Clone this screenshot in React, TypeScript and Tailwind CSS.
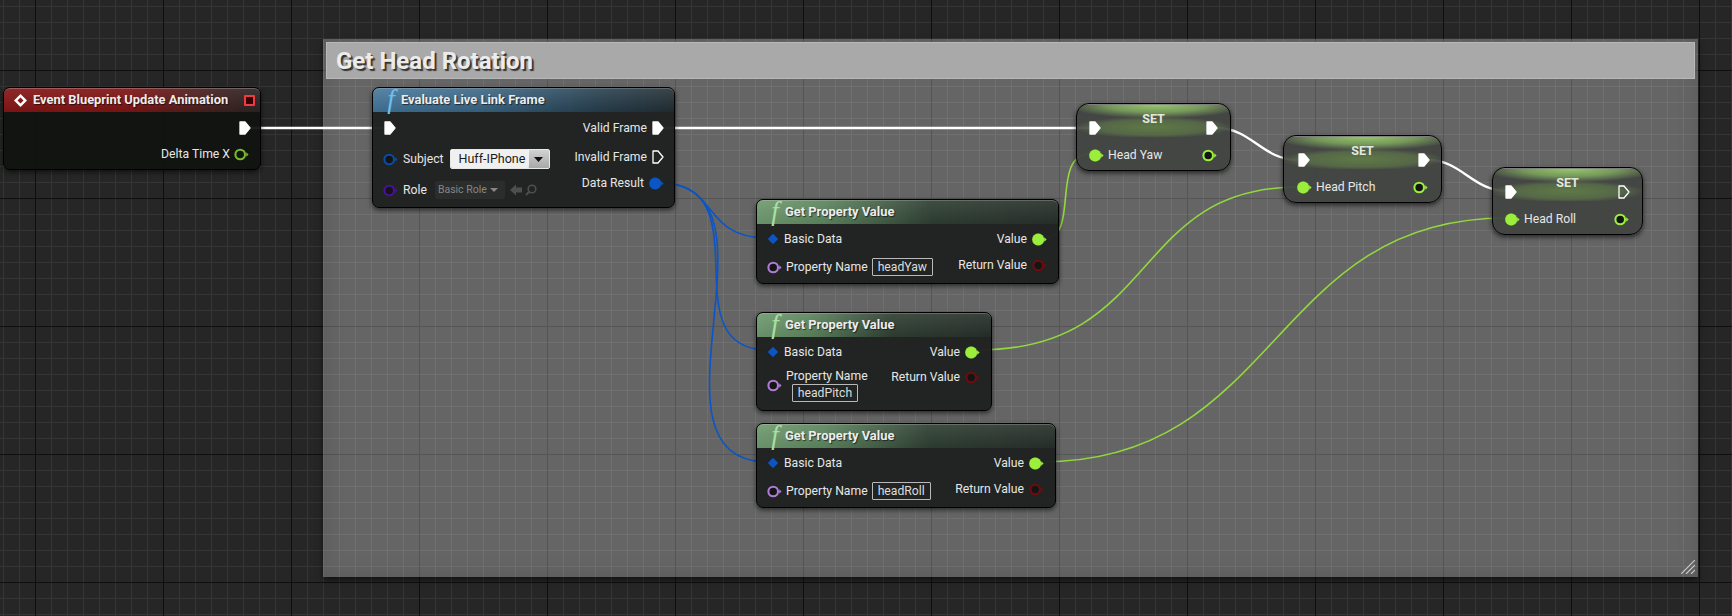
import React from "react";

const C = {
  green: "#9bef3c",
  blue: "#0b55c4",
  deepBlue: "#0a4aa8",
  purple: "#4b0f9e",
  lilac: "#b07ad8",
  red: "#6e0c10",
};

function ExecPin({ filled = true }: { filled?: boolean }) {
  return (
    <svg width="12" height="14" viewBox="0 0 12 14" className="shrink-0 block">
      <path
        d="M1 1 H6 L11 7 L6 13 H1 Z"
        fill={filled ? "#ffffff" : "none"}
        stroke="#ffffff"
        strokeWidth="1.3"
        strokeLinejoin="round"
      />
    </svg>
  );
}

function DataPin({ color, filled = false }: { color: string; filled?: boolean }) {
  return (
    <svg width="15" height="13" viewBox="0 0 15 13" className="shrink-0 block">
      <circle cx="6.2" cy="6.5" r={filled ? 6 : 4.8} fill={filled ? color : "#141614"} stroke={color} strokeWidth={filled ? 0.2 : 2.1} />
      <path d="M12.2 4.2 L14.6 6.5 L12.2 8.8 Z" fill={color} />
    </svg>
  );
}

function DiamondPin() {
  return (
    <svg width="12" height="12" viewBox="0 0 12 12" className="shrink-0 block">
      <path d="M6 .8 L11.2 6 L6 11.2 L.8 6 Z" fill="#0b55c4" />
    </svg>
  );
}

function FIcon({ color }: { color: string }) {
  return (
    <span
      className="font-['Liberation_Serif',serif] italic text-[27px] leading-none w-[16px] shrink-0 text-center -mt-[3px]"
      style={{ color }}
    >
      f
    </span>
  );
}

function Lbl({ children, className = "" }: { children: React.ReactNode; className?: string }) {
  return <span className={"text-[12.2px] leading-none text-[#e6e6e6] whitespace-nowrap " + className}>{children}</span>;
}

function Input({ children, className = "" }: { children: React.ReactNode; className?: string }) {
  return (
    <span className={"h-[18px] flex items-center justify-center border border-[#b9b9b9] rounded-[1px] text-[12.2px] text-[#dcdcdc] leading-none " + className}>
      {children}
    </span>
  );
}

function FuncNode({
  x, y, w, h, title, kind, children,
}: {
  x: number; y: number; w: number; h: number; title: string; kind: "blue" | "green"; children: React.ReactNode;
}) {
  const head =
    kind === "blue"
      ? "bg-[linear-gradient(180deg,rgba(255,255,255,0.1),rgba(0,0,0,0.1)),linear-gradient(90deg,#44779b_0%,#3b6786_35%,#263f4e_75%,#232e34_100%)]"
      : "bg-[linear-gradient(180deg,rgba(255,255,255,0.08),rgba(0,0,0,0.06)),linear-gradient(90deg,#6f9a6f_0%,#5d855e_22%,#2e3e32_58%,#272f2a_100%)]";
  return (
    <div
      className="absolute flex flex-col rounded-[7px] border border-black bg-[rgba(30,33,31,0.96)] shadow-[0_2px_5px_rgba(0,0,0,0.6)]"
      style={{ left: x, top: y, width: w, height: h }}
    >
      <div className={"h-[24px] shrink-0 flex items-center gap-[2px] pl-[10px] rounded-t-[6px] border-t border-[rgba(255,255,255,0.28)] " + head}>
        <FIcon color={kind === "blue" ? "#6cc0f2" : "#a9e0a0"} />
        <span className="text-[12.9px] font-bold text-[#ececec] leading-none whitespace-nowrap [text-shadow:1px_1px_1px_rgba(0,0,0,0.6)]">{title}</span>
      </div>
      {children}
    </div>
  );
}

function Gpv({
  x, y, w, h, name, wrap,
}: {
  x: number; y: number; w: number; h: number; name: string; wrap?: boolean;
}) {
  return (
    <FuncNode x={x} y={y} w={w} h={h} title="Get Property Value" kind="green">
      <div className="flex justify-between flex-1 pl-[10px] pr-[11px] pt-[3px]">
        <div className="flex flex-col">
          <div className="h-[24px] flex items-center gap-[5px]">
            <DiamondPin />
            <Lbl>Basic Data</Lbl>
          </div>
          {wrap ? (
            <div className="flex items-center gap-[4px] mt-[5px]">
              <DataPin color={C.lilac} />
              <div className="flex flex-col items-start">
                <Lbl className="h-[15px] flex items-center">Property Name</Lbl>
                <Input className="w-[66px] ml-[6px]">{name}</Input>
              </div>
            </div>
          ) : (
            <div className="h-[20px] flex items-center gap-[4px] mt-[6px]">
              <DataPin color={C.lilac} />
              <Lbl>Property Name</Lbl>
              <Input className="px-[5px]">{name}</Input>
            </div>
          )}
        </div>
        <div className="flex flex-col items-end">
          <div className="h-[24px] flex items-center gap-[5px]">
            <Lbl>Value</Lbl>
            <DataPin color={C.green} filled />
          </div>
          <div className={"h-[20px] flex items-center gap-[5px] " + (wrap ? "mt-[3px]" : "mt-[4px]")}>
            <Lbl>Return Value</Lbl>
            <DataPin color={C.red} />
          </div>
        </div>
      </div>
    </FuncNode>
  );
}

function SetNode({
  x, y, w, h, label, filledOut = true, wide,
}: {
  x: number; y: number; w: number; h: number; label: string; filledOut?: boolean; wide?: boolean;
}) {
  return (
    <div
      className="absolute flex flex-col rounded-[13px] border border-black bg-[rgba(66,68,66,0.93)] shadow-[0_2px_5px_rgba(0,0,0,0.65)] overflow-hidden"
      style={{ left: x, top: y, width: w, height: h }}
    >
      <div className="h-[33px] shrink-0 relative border-t border-[rgba(255,255,255,0.3)] bg-[radial-gradient(ellipse_58%_42%_at_52%_0%,rgba(155,205,110,0.95)_0%,rgba(135,180,98,0.75)_55%,rgba(100,130,80,0)_100%),radial-gradient(ellipse_52%_34%_at_50%_70%,rgba(100,135,70,0.8)_0%,rgba(100,130,75,0.55)_70%,rgba(90,110,70,0)_100%)]">
        <span className="absolute left-0 right-0 top-[8px] text-center text-[12.5px] font-bold leading-none text-[#e3e8de]">SET</span>
        <div className={"absolute top-[16px] flex justify-between items-center " + (wide ? "left-[14px] right-[11px]" : "left-[12px] right-[12px]")}>
          <ExecPin />
          <ExecPin filled={filledOut} />
        </div>
      </div>
      <div className={"flex items-center justify-between pr-[13px] h-[22px] mt-[7px] " + (wide ? "pl-[13px]" : "pl-[12px]")}>
        <div className="flex items-center gap-[4px]">
          <DataPin color={C.green} filled />
          <Lbl>{label}</Lbl>
        </div>
        <DataPin color={C.green} />
      </div>
    </div>
  );
}

export default function App() {
  return (
    <div className="relative w-[1732px] h-[616px] overflow-hidden font-['Roboto',sans-serif] bg-[#262626] [background-image:linear-gradient(90deg,#0f0f0f_1px,transparent_1px),linear-gradient(#0f0f0f_1px,transparent_1px),linear-gradient(90deg,#353535_1px,transparent_1px),linear-gradient(#353535_1px,transparent_1px)] [background-size:128px_128px,128px_128px,16px_16px,16px_16px] [background-position:35px_0,0_70px,3px_0,0_6px]">
      {/* Comment box */}
      <div className="absolute left-[323px] top-[39px] w-[1375px] h-[538px] bg-[rgba(255,255,255,0.295)] shadow-[0_3px_6px_rgba(0,0,0,0.55),inset_0_0_22px_rgba(0,0,0,0.12)] p-[3px]">
        <div className="h-[37px] bg-[#a9a9a9] border border-[#b8b8b8] flex items-center pl-[9px]">
          <span className="text-[24px] font-bold leading-none text-[#ececec] [text-shadow:2px_2px_1px_rgba(30,30,30,0.85)]">Get Head Rotation</span>
        </div>
        <svg width="14" height="14" viewBox="0 0 14 14" className="absolute right-[3px] bottom-[3px]">
          <path d="M0 14 L14 0 M5 14 L14 5 M10 14 L14 10" stroke="#c8c8c8" strokeWidth="1.2" fill="none" />
        </svg>
      </div>

      {/* Wires */}
      <svg width="1732" height="616" viewBox="0 0 1732 616" className="absolute left-0 top-0 pointer-events-none" fill="none">
        <g stroke="#ffffff" strokeWidth="2.4">
          <path d="M250 128 H383" />
          <path d="M664 128 H1090" />
          <path d="M1216 128 C1252 128 1262 160 1298 160" />
          <path d="M1428 160 C1462 160 1472 191 1508 191" />
        </g>
        <g stroke="#0a55c8" strokeWidth="1.6">
          <path d="M660 183 C720 183 700 238 768 238" />
          <path d="M660 183 C765 183 668 350 768 350" />
          <path d="M660 183 C795 183 632 462 768 462" />
        </g>
        <g stroke="#92d83e" strokeWidth="1.6">
          <path d="M1045 238 C1080 238 1050 154 1090 154" />
          <path d="M978 350 C1160 350 1130 187 1298 187" />
          <path d="M1041 462 C1280 462 1270 218 1506 218" />
        </g>
      </svg>

      {/* Event node */}
      <div className="absolute left-[3px] top-[87px] w-[258px] h-[83px] flex flex-col rounded-[7px] border border-black bg-[rgba(17,19,17,0.95)] shadow-[0_2px_5px_rgba(0,0,0,0.6)]">
        <div className="h-[24px] shrink-0 flex items-center justify-between pl-[9px] pr-[5px] rounded-t-[6px] border-t border-[rgba(255,255,255,0.3)] bg-[linear-gradient(180deg,rgba(255,255,255,0.08),rgba(0,0,0,0.08)),linear-gradient(90deg,#851616_0%,#7e1515_50%,#452020_80%,#2a2424_100%)]">
          <div className="flex items-center gap-[5px]">
            <svg width="15" height="15" viewBox="0 0 15 15" className="block">
              <path d="M7.5 1 L14 7.5 L7.5 14 L1 7.5 Z" fill="#ffffff" />
              <path d="M7.5 4.5 L10.5 7.5 L7.5 10.5 L4.5 7.5 Z" fill="#8d1616" />
            </svg>
            <span className="text-[12.9px] font-bold leading-none text-[#ececec] whitespace-nowrap [text-shadow:1px_1px_1px_rgba(0,0,0,0.6)]">Event Blueprint Update Animation</span>
          </div>
          <span className="w-[11px] h-[11px] border-2 border-[#f03a3f] bg-[#300204] rounded-[1px]" />
        </div>
        <div className="flex flex-col items-end pr-[9px] pt-[9px]">
          <ExecPin />
          <div className="flex items-center gap-[4px] mt-[13px] mr-[2px]">
            <Lbl>Delta Time X</Lbl>
            <DataPin color="#7ab92e" />
          </div>
        </div>
      </div>

      {/* Evaluate Live Link Frame */}
      <FuncNode x={372} y={87} w={303} h={121} title="Evaluate Live Link Frame" kind="blue">
        <div className="flex justify-between pl-[10px] pr-[10px] pt-[4px]">
          <div className="flex flex-col">
            <div className="h-[24px] flex items-center pl-[1px]"><ExecPin /></div>
            <div className="h-[24px] flex items-center mt-[7px] gap-[5px]">
              <DataPin color={C.deepBlue} />
              <Lbl>Subject</Lbl>
              <span className="ml-[1px] w-[100px] h-[20px] flex rounded-[2px] bg-[linear-gradient(180deg,#ffffff,#d8d8d8)] border border-[#e8e8e8] overflow-hidden">
                <span className="w-[78px] h-full flex items-center pl-[8px] bg-[#f0f0f0] rounded-[3px] text-[12.5px] leading-none text-[#1a1a1a] whitespace-nowrap">Huff-IPhone</span>
                <span className="flex-1 flex items-center justify-center bg-[linear-gradient(180deg,#d2d2d2,#a8a8a8)]">
                  <svg width="9" height="5" viewBox="0 0 9 5"><path d="M0 0 H9 L4.5 5 Z" fill="#111" /></svg>
                </span>
              </span>
            </div>
            <div className="h-[24px] flex items-center mt-[7px] gap-[5px]">
              <DataPin color={C.purple} />
              <Lbl>Role</Lbl>
              <span className="ml-[3px] w-[70px] h-[18px] flex items-center gap-[3px] pl-[3px] rounded-[2px] bg-[#2b2d2c] text-[10.5px] leading-none text-[#868686] whitespace-nowrap">
                Basic Role
                <svg width="8" height="4" viewBox="0 0 8 4"><path d="M0 0 H8 L4 4 Z" fill="#868686" /></svg>
              </span>
              <svg width="12" height="12" viewBox="0 0 12 12"><path d="M0 6 L6 0.5 V3.5 H12 V8.5 H6 V11.5 Z" fill="#4c4f4d" /></svg>
              <svg width="12" height="12" viewBox="0 0 12 12" className="-ml-[2px]" fill="none"><circle cx="7" cy="5" r="3.8" stroke="#4c4f4d" strokeWidth="1.6" /><path d="M4.3 7.8 L1 11" stroke="#4c4f4d" strokeWidth="2" /></svg>
            </div>
          </div>
          <div className="flex flex-col items-end">
            <div className="h-[24px] flex items-center gap-[5px]"><Lbl>Valid Frame</Lbl><ExecPin /></div>
            <div className="h-[24px] flex items-center gap-[5px] mt-[5px]"><Lbl>Invalid Frame</Lbl><ExecPin filled={false} /></div>
            <div className="h-[24px] flex items-center gap-[5px] mt-[2px]"><Lbl>Data Result</Lbl><DataPin color={C.blue} filled /></div>
          </div>
        </div>
      </FuncNode>

      <Gpv x={756} y={199} w={303} h={85} name="headYaw" />
      <Gpv x={756} y={312} w={236} h={99} name="headPitch" wrap />
      <Gpv x={756} y={423} w={300} h={85} name="headRoll" />

      <SetNode x={1076} y={103} w={155} h={68} label="Head Yaw" />
      <SetNode x={1283} y={135} w={159} h={68} label="Head Pitch" wide />
      <SetNode x={1492} y={167} w={151} h={68} label="Head Roll" filledOut={false} />
    </div>
  );
}
